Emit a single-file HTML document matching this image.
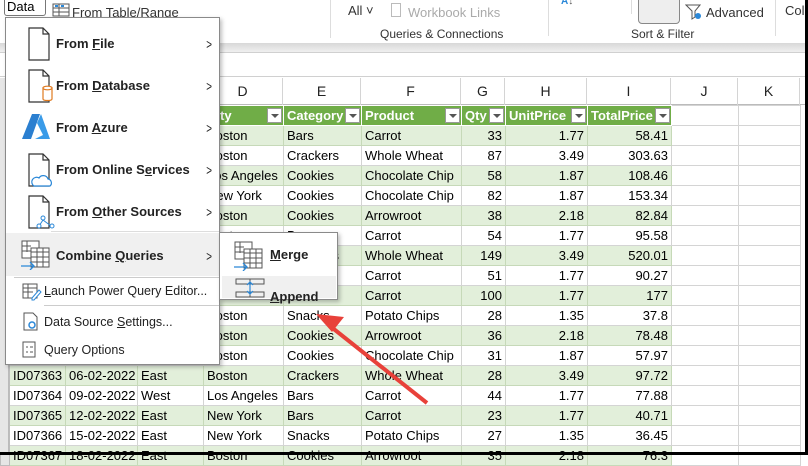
<!DOCTYPE html>
<html><head><meta charset="utf-8">
<style>
*{box-sizing:border-box;margin:0;padding:0}
body{width:808px;height:455px;overflow:hidden;background:#fff;font-family:"Liberation Sans",sans-serif;position:relative;color:#000}
.abs{position:absolute}
table{position:absolute;left:0;top:105px;width:800px;border-collapse:collapse;table-layout:fixed;font-size:13px}
td{height:20px;max-height:20px;border:1px solid #d4d4d4;padding:0 3px;white-space:nowrap;overflow:hidden;line-height:18px;position:relative}
td.n{text-align:right}
td.r{background:#e6e6e6;border-color:#bdbdbd;padding:0;font-size:11px}
tr.g td.d{background:#e2efda;border-color:#c6d9b8}
tr.h td.d{background:#70ad47;color:#fff;font-weight:bold;border-color:#fff}
tr.h td.d span.dd{position:absolute;right:1px;top:2px;width:15px;height:15px;background:#fff;border:1px solid #999}
tr.h td.d span.dd:after{content:"";position:absolute;left:3px;top:5px;border-left:4px solid transparent;border-right:4px solid transparent;border-top:4px solid #555}
.colh{position:absolute;top:78px;height:27px;border-right:1px solid #d4d4d4;text-align:center;font-size:14px;line-height:27px;color:#222}
.menu{position:absolute;left:5px;top:17px;width:215px;height:348px;background:#fff;border:1px solid #8a8a8a;box-shadow:2px 2px 4px rgba(0,0,0,.25)}
.it{position:absolute;left:0;width:213px;font-size:13px;font-weight:bold;color:#222}
.it .t{position:absolute;left:50px}
.it .ch{position:absolute;left:199px;font-weight:normal;font-size:14px;transform:scaleX(.7)}
.sm{font-weight:normal;font-size:12.5px}
u{text-decoration:underline}
</style></head><body>
<div class="abs" style="left:0;top:0;width:808px;height:44px;background:#fff"></div>
<div class="abs" style="left:4px;top:0;width:42px;height:16px;border:1px solid #777;border-top:none;border-radius:0 0 3px 3px;font-size:13px;line-height:14px;padding-left:2px">Data ˅</div>
<svg class="abs" style="left:52px;top:3px" width="18" height="14"><rect x="1" y="1" width="16" height="12" fill="none" stroke="#555"/><line x1="1" y1="5" x2="17" y2="5" stroke="#555"/><line x1="1" y1="9" x2="17" y2="9" stroke="#555"/><line x1="7" y1="1" x2="7" y2="13" stroke="#555"/><rect x="3" y="2" width="3" height="2" fill="#2b88d8"/><rect x="9" y="2" width="3" height="2" fill="#2b88d8"/></svg>
<div class="abs" style="left:72px;top:5px;font-size:13px;color:#333">From Table/Range</div>
<div class="abs" style="left:330px;top:0;width:1px;height:38px;background:#ddd"></div>
<div class="abs" style="left:348px;top:3px;font-size:13px;color:#333">All ˅</div>
<div class="abs" style="left:391px;top:3px;width:10px;height:14px;border:1px solid #bbb"></div>
<div class="abs" style="left:408px;top:5px;font-size:13px;color:#aaa">Workbook Links</div>
<div class="abs" style="left:380px;top:27px;font-size:12px;color:#333">Queries &amp; Connections</div>
<div class="abs" style="left:548px;top:0;width:1px;height:36px;background:#ddd"></div>
<div class="abs" style="left:561px;top:-4px;font-size:10px;color:#2b88d8;font-weight:bold">A<span style="color:#555">↓</span></div>
<div class="abs" style="left:631px;top:0;width:1px;height:14px;background:#ddd"></div>
<div class="abs" style="left:638px;top:-4px;width:42px;height:28px;border:1px solid #888;border-radius:4px;background:#eee"></div>
<div class="abs" style="left:631px;top:27px;font-size:12px;color:#333">Sort &amp; Filter</div>
<svg class="abs" style="left:685px;top:4px" width="18" height="16"><path d="M1 1h14l-5 6v6l-3 2v-8z" fill="none" stroke="#555"/><circle cx="13" cy="12" r="3" fill="#2b88d8"/></svg>
<div class="abs" style="left:706px;top:5px;font-size:13px;color:#333">Advanced</div>
<div class="abs" style="left:775px;top:0;width:1px;height:36px;background:#ddd"></div>
<div class="abs" style="left:785px;top:3px;font-size:13px;color:#333">Colu</div>
<div class="abs" style="left:0;top:43px;width:808px;height:9px;background:linear-gradient(#d8d8d8,#f0f0f0)"></div>
<div class="abs" style="left:0;top:52px;width:808px;height:25px;background:#fff;border-top:1px solid #d0d0d0;border-bottom:1px solid #d0d0d0"></div>
<div class="abs" style="left:0;top:78px;width:808px;height:27px;background:#fff;border-bottom:1px solid #bbb"></div>
<div class="colh" style="left:203px;width:80px">D</div>
<div class="colh" style="left:283px;width:78px">E</div>
<div class="colh" style="left:361px;width:100px">F</div>
<div class="colh" style="left:461px;width:44px">G</div>
<div class="colh" style="left:505px;width:82px">H</div>
<div class="colh" style="left:587px;width:84px">I</div>
<div class="colh" style="left:671px;width:67px">J</div>
<div class="colh" style="left:738px;width:62px">K</div>

<table>
<colgroup><col style="width:9px"><col style="width:56px"><col style="width:72px"><col style="width:66px"><col style="width:80px"><col style="width:78px"><col style="width:100px"><col style="width:44px"><col style="width:82px"><col style="width:84px"><col style="width:67px"><col style="width:62px"></colgroup>
<tr class="h"><td class="r"></td><td class="d"></td><td class="d"></td><td class="d"></td><td class="d">City<span class="dd"></span></td><td class="d">Category<span class="dd"></span></td><td class="d">Product<span class="dd"></span></td><td class="d">Qty<span class="dd"></span></td><td class="d">UnitPrice<span class="dd"></span></td><td class="d">TotalPrice<span class="dd"></span></td><td></td><td></td></tr>
<tr class="g"><td class="r"></td><td class="d"></td><td class="d"></td><td class="d"></td><td class="d">Boston</td><td class="d">Bars</td><td class="d">Carrot</td><td class="d n">33</td><td class="d n">1.77</td><td class="d n">58.41</td><td></td><td></td></tr>
<tr><td class="r"></td><td class="d"></td><td class="d"></td><td class="d"></td><td class="d">Boston</td><td class="d">Crackers</td><td class="d">Whole Wheat</td><td class="d n">87</td><td class="d n">3.49</td><td class="d n">303.63</td><td></td><td></td></tr>
<tr class="g"><td class="r"></td><td class="d"></td><td class="d"></td><td class="d"></td><td class="d">Los Angeles</td><td class="d">Cookies</td><td class="d">Chocolate Chip</td><td class="d n">58</td><td class="d n">1.87</td><td class="d n">108.46</td><td></td><td></td></tr>
<tr><td class="r"></td><td class="d"></td><td class="d"></td><td class="d"></td><td class="d">New York</td><td class="d">Cookies</td><td class="d">Chocolate Chip</td><td class="d n">82</td><td class="d n">1.87</td><td class="d n">153.34</td><td></td><td></td></tr>
<tr class="g"><td class="r"></td><td class="d"></td><td class="d"></td><td class="d"></td><td class="d">Boston</td><td class="d">Cookies</td><td class="d">Arrowroot</td><td class="d n">38</td><td class="d n">2.18</td><td class="d n">82.84</td><td></td><td></td></tr>
<tr><td class="r"></td><td class="d"></td><td class="d"></td><td class="d"></td><td class="d">Boston</td><td class="d">Bars</td><td class="d">Carrot</td><td class="d n">54</td><td class="d n">1.77</td><td class="d n">95.58</td><td></td><td></td></tr>
<tr class="g"><td class="r"></td><td class="d"></td><td class="d"></td><td class="d"></td><td class="d">Boston</td><td class="d">Crackers</td><td class="d">Whole Wheat</td><td class="d n">149</td><td class="d n">3.49</td><td class="d n">520.01</td><td></td><td></td></tr>
<tr><td class="r"></td><td class="d"></td><td class="d"></td><td class="d"></td><td class="d">Boston</td><td class="d">Bars</td><td class="d">Carrot</td><td class="d n">51</td><td class="d n">1.77</td><td class="d n">90.27</td><td></td><td></td></tr>
<tr class="g"><td class="r"></td><td class="d"></td><td class="d"></td><td class="d"></td><td class="d">Boston</td><td class="d">Bars</td><td class="d">Carrot</td><td class="d n">100</td><td class="d n">1.77</td><td class="d n">177</td><td></td><td></td></tr>
<tr><td class="r"></td><td class="d"></td><td class="d"></td><td class="d"></td><td class="d">Boston</td><td class="d">Snacks</td><td class="d">Potato Chips</td><td class="d n">28</td><td class="d n">1.35</td><td class="d n">37.8</td><td></td><td></td></tr>
<tr class="g"><td class="r"></td><td class="d"></td><td class="d"></td><td class="d"></td><td class="d">Boston</td><td class="d">Cookies</td><td class="d">Arrowroot</td><td class="d n">36</td><td class="d n">2.18</td><td class="d n">78.48</td><td></td><td></td></tr>
<tr><td class="r"></td><td class="d"></td><td class="d"></td><td class="d"></td><td class="d">Boston</td><td class="d">Cookies</td><td class="d">Chocolate Chip</td><td class="d n">31</td><td class="d n">1.87</td><td class="d n">57.97</td><td></td><td></td></tr>
<tr class="g"><td class="r"></td><td class="d">ID07363</td><td class="d">06-02-2022</td><td class="d">East</td><td class="d">Boston</td><td class="d">Crackers</td><td class="d">Whole Wheat</td><td class="d n">28</td><td class="d n">3.49</td><td class="d n">97.72</td><td></td><td></td></tr>
<tr><td class="r"></td><td class="d">ID07364</td><td class="d">09-02-2022</td><td class="d">West</td><td class="d">Los Angeles</td><td class="d">Bars</td><td class="d">Carrot</td><td class="d n">44</td><td class="d n">1.77</td><td class="d n">77.88</td><td></td><td></td></tr>
<tr class="g"><td class="r"></td><td class="d">ID07365</td><td class="d">12-02-2022</td><td class="d">East</td><td class="d">New York</td><td class="d">Bars</td><td class="d">Carrot</td><td class="d n">23</td><td class="d n">1.77</td><td class="d n">40.71</td><td></td><td></td></tr>
<tr><td class="r"></td><td class="d">ID07366</td><td class="d">15-02-2022</td><td class="d">East</td><td class="d">New York</td><td class="d">Snacks</td><td class="d">Potato Chips</td><td class="d n">27</td><td class="d n">1.35</td><td class="d n">36.45</td><td></td><td></td></tr>
<tr class="g"><td class="r"></td><td class="d">ID07367</td><td class="d">18-02-2022</td><td class="d">East</td><td class="d">Boston</td><td class="d">Cookies</td><td class="d">Arrowroot</td><td class="d n">35</td><td class="d n">2.18</td><td class="d n">76.3</td><td></td><td></td></tr>
</table>
<div class="abs" style="left:0;top:78px;width:9px;height:377px;background:#e6e6e6;border-right:1px solid #bbb"></div>
<div class="abs" style="left:0;top:452px;width:808px;height:3px;background:#000"></div>
<div class="abs" style="left:805px;top:0;width:3px;height:455px;background:#000"></div>

<div class="menu">
 <div class="abs" style="left:0;top:215px;width:213px;height:43px;background:#f0f0f0"></div>
 <svg class="abs" style="left:15px;top:9px" width="30" height="34"><path d="M8 1h14l6 6v26H8z M22 1v6h6" fill="none" stroke="#333" stroke-width="1.2"/></svg>
 <div class="it" style="top:18px"><span class="t">From <u>F</u>ile</span><span class="ch">&gt;</span></div>
 <svg class="abs" style="left:15px;top:51px" width="34" height="34"><path d="M8 1h14l6 6v26H8z M22 1v6h6" fill="#fff" stroke="#333" stroke-width="1.2"/><path d="M22 19v11c0 2 9 2 9 0V19z" fill="#fff" stroke="#e07a1f" stroke-width="1.2"/><ellipse cx="26.5" cy="19" rx="4.5" ry="1.8" fill="#fff" stroke="#e07a1f" stroke-width="1.2"/></svg>
 <div class="it" style="top:60px"><span class="t">From <u>D</u>atabase</span><span class="ch">&gt;</span></div>
 <svg class="abs" style="left:15px;top:95px" width="30" height="28"><path d="M11 1h8L10 26H1z" fill="#2b7fd0"/><path d="M20 1l9 25H14l8-4-6-12z" fill="#3a9be8"/></svg>
 <div class="it" style="top:102px"><span class="t">From <u>A</u>zure</span><span class="ch">&gt;</span></div>
 <svg class="abs" style="left:15px;top:135px" width="34" height="34"><path d="M8 1h14l6 6v26H8z M22 1v6h6" fill="#fff" stroke="#333" stroke-width="1.2"/><path d="M13 33h16a4 4 0 0 0-2-7 5 5 0 0 0-9-1 4 4 0 0 0-5 8z" fill="#fff" stroke="#2b88d8" stroke-width="1.2"/></svg>
 <div class="it" style="top:144px"><span class="t">From Online S<u>e</u>rvices</span><span class="ch">&gt;</span></div>
 <svg class="abs" style="left:15px;top:177px" width="36" height="34"><path d="M8 1h14l6 6v26H8z M22 1v6h6" fill="#fff" stroke="#333" stroke-width="1.2"/><path d="M22 25l-4 6M22 25l8 6" stroke="#2b88d8"/><circle cx="22" cy="23" r="2" fill="#fff" stroke="#2b88d8"/><circle cx="18" cy="31" r="2" fill="#fff" stroke="#2b88d8"/><circle cx="31" cy="31" r="2" fill="#fff" stroke="#2b88d8"/></svg>
 <div class="it" style="top:186px"><span class="t">From <u>O</u>ther Sources</span><span class="ch">&gt;</span></div>
 <div class="abs" style="left:45px;top:213px;width:168px;height:1px;background:#ddd"></div>
 <svg class="abs" style="left:15px;top:222px" width="34" height="30"><g fill="#fff" stroke="#555"><rect x="1" y="1" width="17" height="17"/><rect x="10" y="8" width="18" height="19"/></g><path d="M10 12h18M10 17h18M10 22h18M16 8v19M22 8v19M1 6h9M1 11h9M6 1v11" stroke="#555" fill="none"/><path d="M0 26h13M9 22l4 4-4 4" stroke="#2b88d8" fill="none" stroke-width="1.3"/></svg>
 <div class="it" style="top:230px"><span class="t">Combine <u>Q</u>ueries</span><span class="ch">&gt;</span></div>
 <div class="abs" style="left:8px;top:259px;width:205px;height:1px;background:#ccc"></div>
 <svg class="abs" style="left:16px;top:265px" width="20" height="18"><rect x="1" y="1" width="14" height="14" fill="none" stroke="#555"/><path d="M1 5h14M1 9h10M6 1v14" stroke="#555"/><path d="M10 15l7-8 2 2-7 8h-2z" fill="#fff" stroke="#2b88d8"/></svg>
 <div class="it sm" style="top:266px"><span class="t" style="left:38px"><u>L</u>aunch Power Query Editor...</span></div>
 <div class="abs" style="left:38px;top:287px;width:175px;height:1px;background:#ccc"></div>
 <svg class="abs" style="left:16px;top:294px" width="20" height="20"><path d="M2 1h9l4 4v13H2z" fill="none" stroke="#555"/><circle cx="10" cy="13" r="3" fill="none" stroke="#2b88d8" stroke-width="1.5"/></svg>
 <div class="it sm" style="top:297px"><span class="t" style="left:38px">Data Source <u>S</u>ettings...</span></div>
 <svg class="abs" style="left:16px;top:323px" width="16" height="18"><rect x="1" y="1" width="12" height="15" fill="none" stroke="#555"/><path d="M4 6h2M8 6h3M4 11h2M8 11h3" stroke="#555"/></svg>
 <div class="it sm" style="top:325px"><span class="t" style="left:38px">Query Options</span></div>
</div>
<div class="abs" style="left:219px;top:232px;width:119px;height:68px;background:#fff;border:1px solid #8a8a8a;box-shadow:2px 2px 4px rgba(0,0,0,.25)">
 <div class="abs" style="left:2px;top:43px;width:114px;height:22px;background:#f0f0f0"></div>
 <svg class="abs" style="left:14px;top:8px" width="34" height="30"><g fill="#fff" stroke="#555"><rect x="1" y="1" width="17" height="17"/><rect x="10" y="8" width="18" height="19"/></g><path d="M10 12h18M10 17h18M10 22h18M16 8v19M22 8v19M1 6h9M1 11h9M6 1v11" stroke="#555" fill="none"/><path d="M0 26h13M9 22l4 4-4 4" stroke="#2b88d8" fill="none" stroke-width="1.3"/></svg>
 <div class="abs" style="left:50px;top:14px;font-size:13px;font-weight:bold;color:#222"><u>M</u>erge</div>
 <svg class="abs" style="left:15px;top:45px" width="30" height="20"><path d="M1 1h28v5H1zM1 14h28v5H1zM15 1v5M15 14v5" fill="none" stroke="#555"/><path d="M15 4v12M12 7l3-3 3 3M12 13l3 3 3-3" fill="none" stroke="#2b88d8" stroke-width="1.2"/></svg>
 <div class="abs" style="left:50px;top:56px;font-size:13px;font-weight:bold;color:#222"><u>A</u>ppend</div>
</div>
<svg class="abs" style="left:0;top:0" width="808" height="455"><line x1="427" y1="403" x2="330" y2="326" stroke="#e8413a" stroke-width="4"/><path d="M316 314l28 3-12 15z" fill="#e8413a"/></svg>
</body></html>
